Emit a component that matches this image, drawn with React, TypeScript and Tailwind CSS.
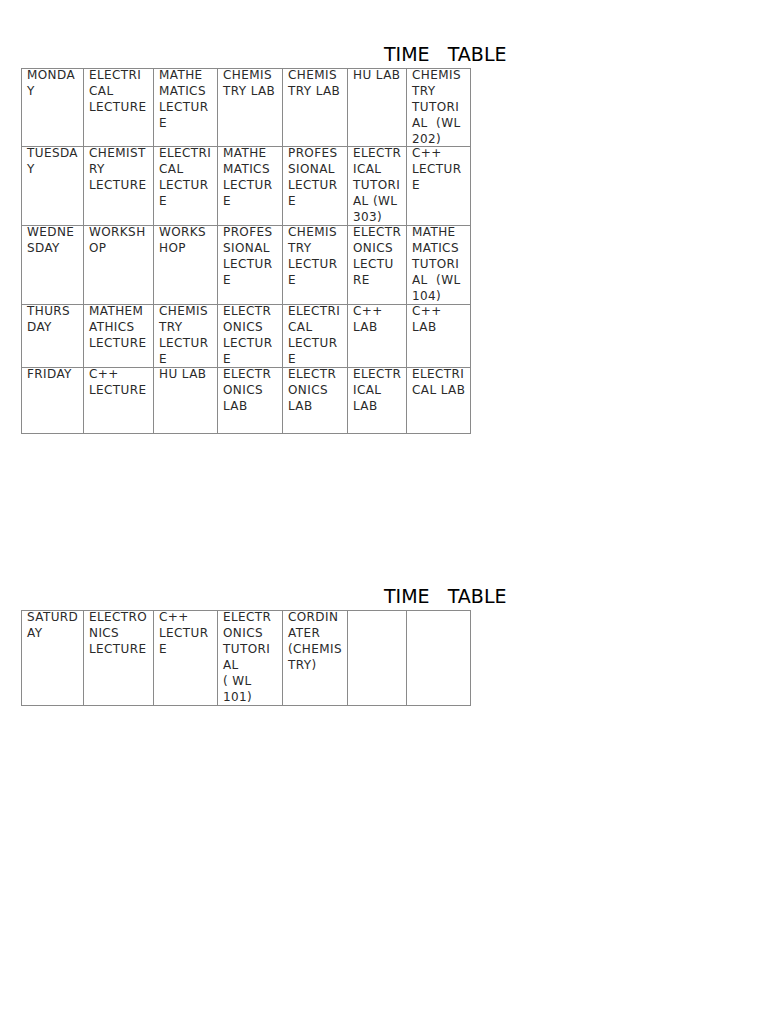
type Cell = string[];
type Row = { h: string; cells: Cell[] };

const week: Row[] = [
  {
    h: 'h-[78px]',
    cells: [
      ['MONDA', 'Y'],
      ['ELECTRI', 'CAL', 'LECTURE'],
      ['MATHE', 'MATICS', 'LECTUR', 'E'],
      ['CHEMIS', 'TRY LAB'],
      ['CHEMIS', 'TRY LAB'],
      ['HU LAB'],
      ['CHEMIS', 'TRY', 'TUTORI', 'AL  (WL', '202)'],
    ],
  },
  {
    h: 'h-[79px]',
    cells: [
      ['TUESDA', 'Y'],
      ['CHEMIST', 'RY', 'LECTURE'],
      ['ELECTRI', 'CAL', 'LECTUR', 'E'],
      ['MATHE', 'MATICS', 'LECTUR', 'E'],
      ['PROFES', 'SIONAL', 'LECTUR', 'E'],
      ['ELECTR', 'ICAL', 'TUTORI', 'AL (WL', '303)'],
      ['C++', 'LECTUR', 'E'],
    ],
  },
  {
    h: 'h-[79px]',
    cells: [
      ['WEDNE', 'SDAY'],
      ['WORKSH', 'OP'],
      ['WORKS', 'HOP'],
      ['PROFES', 'SIONAL', 'LECTUR', 'E'],
      ['CHEMIS', 'TRY', 'LECTUR', 'E'],
      ['ELECTR', 'ONICS', 'LECTU', 'RE'],
      ['MATHE', 'MATICS', 'TUTORI', 'AL  (WL', '104)'],
    ],
  },
  {
    h: 'h-[63px]',
    cells: [
      ['THURS', 'DAY'],
      ['MATHEM', 'ATHICS', 'LECTURE'],
      ['CHEMIS', 'TRY', 'LECTUR', 'E'],
      ['ELECTR', 'ONICS', 'LECTUR', 'E'],
      ['ELECTRI', 'CAL', 'LECTUR', 'E'],
      ['C++', 'LAB'],
      ['C++', 'LAB'],
    ],
  },
  {
    h: 'h-[66px]',
    cells: [
      ['FRIDAY'],
      ['C++', 'LECTURE'],
      ['HU LAB'],
      ['ELECTR', 'ONICS', 'LAB'],
      ['ELECTR', 'ONICS', 'LAB'],
      ['ELECTR', 'ICAL', 'LAB'],
      ['ELECTRI', 'CAL LAB'],
    ],
  },
];

const saturday: Row[] = [
  {
    h: 'h-[95px]',
    cells: [
      ['SATURD', 'AY'],
      ['ELECTRO', 'NICS', 'LECTURE'],
      ['C++', 'LECTUR', 'E'],
      ['ELECTR', 'ONICS', 'TUTORI', 'AL', '( WL', '101)'],
      ['CORDIN', 'ATER', '(CHEMIS', 'TRY)'],
      [],
      [],
    ],
  },
];

function Title() {
  return (
    <div className="pl-[384px] text-[19px] leading-[24px] text-black whitespace-pre">
      TIME   TABLE
    </div>
  );
}

function Grid({ rows }: { rows: Row[] }) {
  return (
    <table className="ml-[21px] mt-[2px] table-fixed border-collapse w-[450px]">
      <colgroup>
        <col className="w-[62px]" />
        <col className="w-[70px]" />
        <col className="w-[64px]" />
        <col className="w-[65px]" />
        <col className="w-[65px]" />
        <col className="w-[59px]" />
        <col className="w-[64px]" />
      </colgroup>
      <tbody>
        {rows.map((r, ri) => (
          <tr key={ri} className={r.h}>
            {r.cells.map((lines, ci) => (
              <td
                key={ci}
                className="border border-[#8a8a8a] align-top pl-[5px] pr-0 pt-0 pb-0 text-[12px] leading-[16px] text-[#2a2a2a] tracking-[0.4px]"
              >
                <div className="h-[20px] -mt-[2px] overflow-visible">
                  {lines.map((l, li) => (
                    <div key={li} className="whitespace-pre">
                      {l}
                    </div>
                  ))}
                </div>
              </td>
            ))}
          </tr>
        ))}
      </tbody>
    </table>
  );
}

export default function App() {
  return (
    <main className="w-[768px] h-[1024px] bg-white pt-[42px] font-['DejaVu_Sans','Liberation_Sans',sans-serif]">
      <Title />
      <Grid rows={week} />
      <div className="mt-[150px]">
        <Title />
        <Grid rows={saturday} />
      </div>
    </main>
  );
}
